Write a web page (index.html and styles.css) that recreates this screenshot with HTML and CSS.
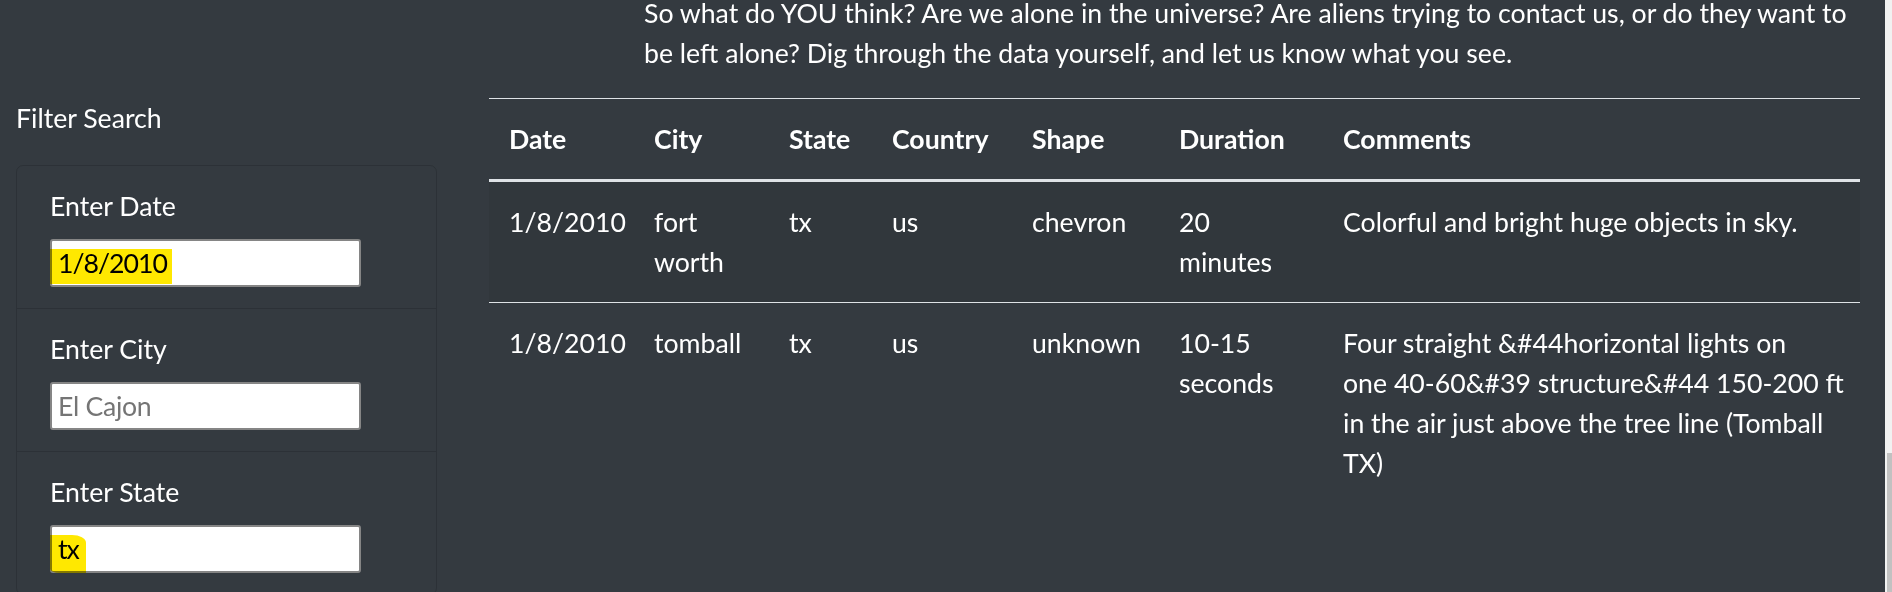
FILE: index.html
```html
<!DOCTYPE html>
<html lang="en">
<head>
<meta charset="utf-8">
<title>UFO Sightings</title>
<link rel="stylesheet" href="styles.css">
</head>
<body>
<div class="page">
  <div class="content">
    <div class="intro">
      <p>So what do YOU think? Are we alone in the universe? Are aliens trying to contact us, or do they want to be left alone? Dig through the data yourself, and let us know what you see.</p>
    </div>
    <div class="main">
      <aside class="sidebar">
        <div class="filter-title">Filter Search</div>
        <ul class="filters">
          <li class="filter-item">
            <label for="date">Enter Date</label>
            <div class="field">
              <input id="date" type="text" value="1/8/2010" placeholder="1/10/2010">
              <span class="hl hl-date"></span>
            </div>
          </li>
          <li class="filter-item">
            <label for="city">Enter City</label>
            <div class="field">
              <input id="city" type="text" placeholder="El Cajon">
            </div>
          </li>
          <li class="filter-item">
            <label for="state">Enter State</label>
            <div class="field">
              <input id="state" type="text" value="tx" placeholder="CA">
              <span class="hl hl-state"></span>
            </div>
          </li>
        </ul>
      </aside>
      <section class="results">
        <table class="ufo-table">
          <colgroup>
            <col class="c-date">
            <col class="c-city">
            <col class="c-state">
            <col class="c-country">
            <col class="c-shape">
            <col class="c-duration">
            <col class="c-comments">
          </colgroup>
          <thead>
            <tr>
              <th>Date</th>
              <th>City</th>
              <th>State</th>
              <th>Country</th>
              <th>Shape</th>
              <th>Duration</th>
              <th>Comments</th>
            </tr>
          </thead>
          <tbody>
            <tr>
              <td>1/8/2010</td>
              <td>fort worth</td>
              <td>tx</td>
              <td>us</td>
              <td>chevron</td>
              <td>20 minutes</td>
              <td>Colorful and bright huge objects in sky.</td>
            </tr>
            <tr>
              <td>1/8/2010</td>
              <td>tomball</td>
              <td>tx</td>
              <td>us</td>
              <td>unknown</td>
              <td>10-15 seconds</td>
              <td>Four straight &amp;#44horizontal lights on<br>one 40-60&amp;#39 structure&amp;#44 150-200 ft<br>in the air just above the tree line (Tomball<br>TX)</td>
            </tr>
          </tbody>
        </table>
      </section>
    </div>
  </div>
  <div class="scrollbar"><div class="thumb"></div></div>
</div>
</body>
</html>
```

FILE: styles.css
```css
html, body {
  margin: 0;
  height: 100%;
  overflow: hidden;
  background: #343a40;
}

body {
  font-family: Lato, "Liberation Sans", Arial, sans-serif;
  font-size: 26.67px;
  line-height: 40px;
  color: #fff;
}

.page {
  display: flex;
  height: 100%;
}

.content {
  flex: 1;
  min-width: 0;
  padding: 0 25px 0 16px;
}

.intro {
  padding-left: 628px;
}

.intro p {
  margin: -7px 0 25px;
}

.main {
  display: flex;
  align-items: flex-start;
  gap: 52px;
}

.sidebar {
  flex: none;
  width: 421px;
}

.filter-title {
  margin-bottom: 27px;
}

.filters {
  list-style: none;
  margin: 0;
  padding: 0;
  border: 1px solid rgba(0, 0, 0, 0.14);
  border-radius: 7px;
}

.filter-item {
  display: flex;
  flex-direction: column;
  align-items: flex-start;
  gap: 13px;
  padding: 20px 33px 21px;
}

.filter-item + .filter-item {
  border-top: 1px solid rgba(0, 0, 0, 0.14);
}

.field {
  position: relative;
  width: 311px;
  height: 48px;
}

.field input {
  box-sizing: border-box;
  width: 100%;
  height: 100%;
  margin: 0;
  padding: 0 6px;
  border: 2px solid #858585;
  border-radius: 3px;
  background: #fff;
  color: #000;
  font: inherit;
  line-height: normal;
  letter-spacing: -1px;
}

.field input::placeholder {
  color: #757575;
  letter-spacing: -0.3px;
}

.hl {
  position: absolute;
  left: 0;
  background: #ffe800;
  mix-blend-mode: multiply;
  pointer-events: none;
}

.hl-date {
  top: 10px;
  width: 122px;
  height: 35px;
}

.hl-state {
  top: 10px;
  width: 36px;
  height: 38px;
  border-top-right-radius: 14px 8px;
  border-bottom-left-radius: 10px 4px;
}

.results {
  flex: 1;
  min-width: 0;
}

.ufo-table {
  width: 100%;
  border-collapse: collapse;
  table-layout: fixed;
}

.c-date { width: 145px; }
.c-city { width: 135px; }
.c-state { width: 103px; }
.c-country { width: 140px; }
.c-shape { width: 147px; }
.c-duration { width: 164px; }

.ufo-table th,
.ufo-table td {
  padding: 20px;
  text-align: left;
  vertical-align: top;
  border-top: 1px solid #dee2e6;
}

.ufo-table td:last-child {
  padding-right: 6px;
}

.ufo-table thead th {
  font-weight: 700;
  border-bottom: 3px solid #dee2e6;
}

.ufo-table tbody tr:nth-child(odd) {
  background: rgba(0, 0, 0, 0.05);
}

.scrollbar {
  flex: none;
  width: 7px;
  display: flex;
  flex-direction: column;
  justify-content: flex-end;
  background: #f1f1f1;
}

.thumb {
  height: 139px;
  margin-left: 2px;
  background: #c1c1c1;
}
```
